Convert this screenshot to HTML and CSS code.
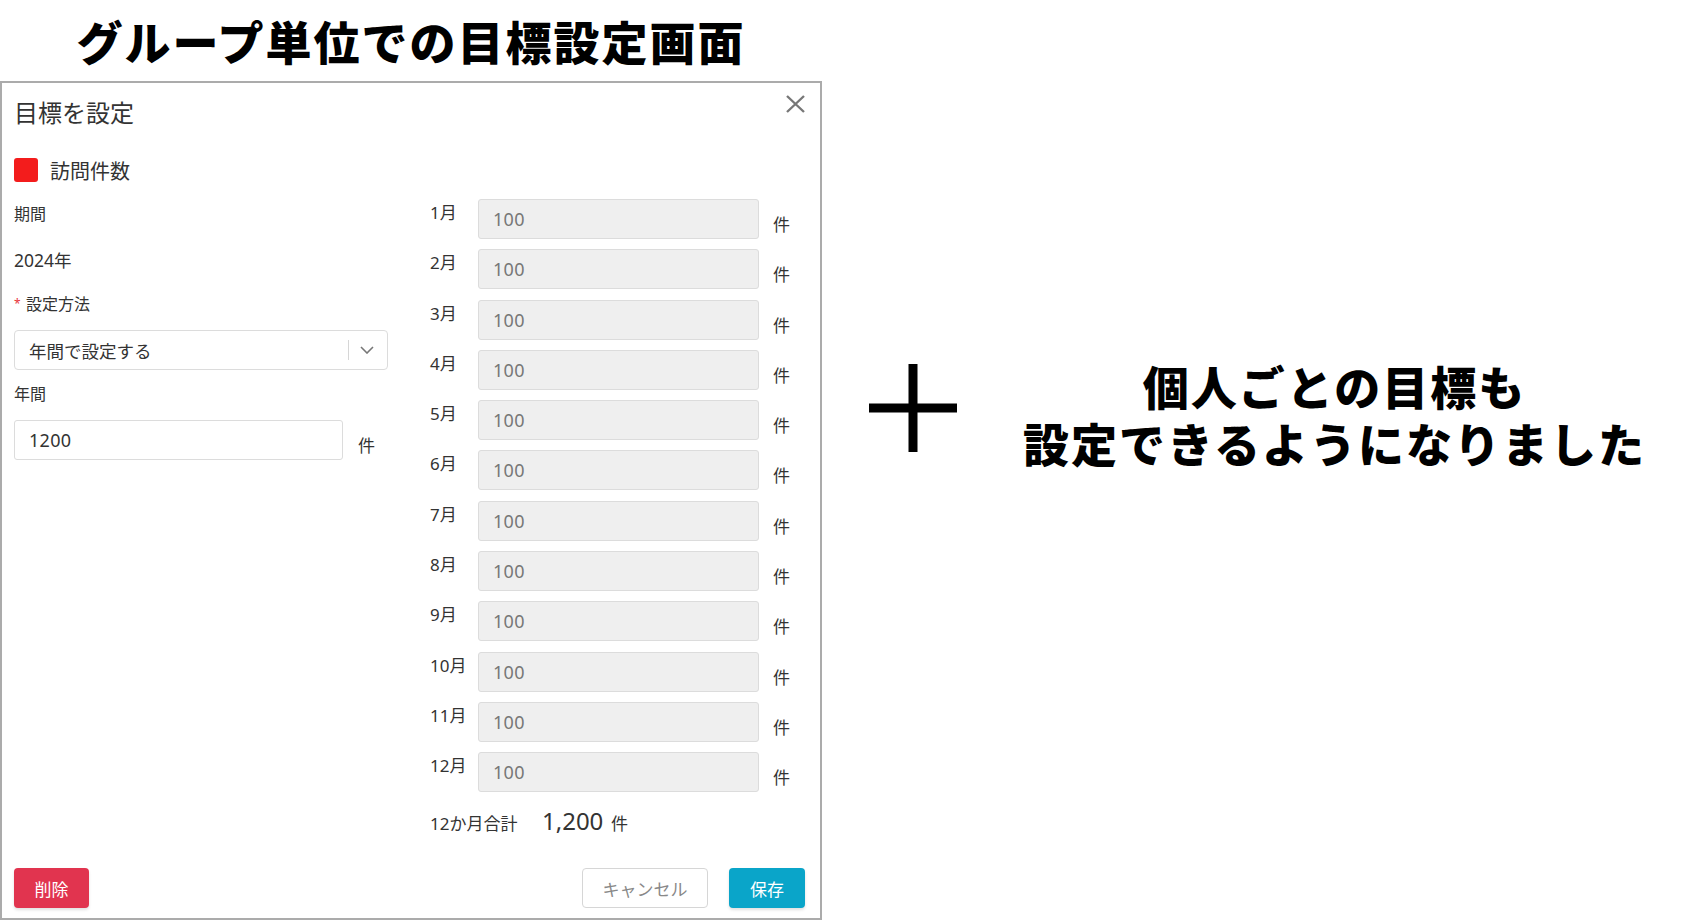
FILE: index.html
```html
<!DOCTYPE html>
<html lang="ja">
<head>
    <meta charset="utf-8">
    <title>目標設定</title>
    <link rel="stylesheet" href="styles.css">
</head>
<body>
    <div class="page">
        <div class="left">
            <h1 class="headline">グループ単位での目標設定画面</h1>

            <div class="modal">
                <div class="modal-header">
                    <h2>目標を設定</h2>
                    <button class="close" aria-label="閉じる">
                        <svg width="19" height="18" viewBox="0 0 19 18">
                            <path d="M1 1 L18 17 M18 1 L1 17" stroke="#777" stroke-width="2.4" fill="none"/>
                        </svg>
                    </button>
                </div>

                <div class="legend">
                    <span class="swatch"></span>
                    <span>訪問件数</span>
                </div>

                <div class="modal-body">
                    <div class="settings">
                        <div class="label first">期間</div>
                        <div class="value">2024年</div>
                        <div class="label required"><span class="star">*</span>設定方法</div>
                        <div class="select">
                            <span class="select-text">年間で設定する</span>
                            <span class="select-divider"></span>
                            <svg class="chevron" width="14" height="8" viewBox="0 0 14 8">
                                <path d="M1 1 L7 7 L13 1" stroke="#777" stroke-width="1.6" fill="none"/>
                            </svg>
                        </div>
                        <div class="label">年間</div>
                        <div class="field-row">
                            <div class="input white wide">1200</div>
                            <span class="unit">件</span>
                        </div>
                    </div>

                    <div class="months">
                        <div class="month-row"><span class="month">1月</span><div class="input">100</div><span class="unit">件</span></div>
                        <div class="month-row"><span class="month">2月</span><div class="input">100</div><span class="unit">件</span></div>
                        <div class="month-row"><span class="month">3月</span><div class="input">100</div><span class="unit">件</span></div>
                        <div class="month-row"><span class="month">4月</span><div class="input">100</div><span class="unit">件</span></div>
                        <div class="month-row"><span class="month">5月</span><div class="input">100</div><span class="unit">件</span></div>
                        <div class="month-row"><span class="month">6月</span><div class="input">100</div><span class="unit">件</span></div>
                        <div class="month-row"><span class="month">7月</span><div class="input">100</div><span class="unit">件</span></div>
                        <div class="month-row"><span class="month">8月</span><div class="input">100</div><span class="unit">件</span></div>
                        <div class="month-row"><span class="month">9月</span><div class="input">100</div><span class="unit">件</span></div>
                        <div class="month-row"><span class="month">10月</span><div class="input">100</div><span class="unit">件</span></div>
                        <div class="month-row"><span class="month">11月</span><div class="input">100</div><span class="unit">件</span></div>
                        <div class="month-row"><span class="month">12月</span><div class="input">100</div><span class="unit">件</span></div>

                        <div class="total">
                            <span class="total-label">12か月合計</span>
                            <span class="total-value">1,200</span>
                            <span class="total-unit">件</span>
                        </div>
                    </div>
                </div>

                <div class="modal-footer">
                    <button class="btn btn-danger">削除</button>
                    <div class="footer-right">
                        <button class="btn btn-cancel">キャンセル</button>
                        <button class="btn btn-primary">保存</button>
                    </div>
                </div>
            </div>
        </div>

        <div class="note">
            <svg class="plus" width="88" height="88" viewBox="0 0 88 88">
                <rect x="0" y="39.5" width="88" height="9" fill="#000"/>
                <rect x="39.5" y="0" width="9" height="88" fill="#000"/>
            </svg>
            <div class="message">
                <p>個人ごとの目標も</p>
                <p>設定できるようになりました</p>
            </div>
        </div>
    </div>
</body>
</html>
```

FILE: styles.css
```css
* {
    margin: 0;
    padding: 0;
    box-sizing: border-box;
}

body {
    background: #fff;
    color: #333;
    font-family: "Noto Sans", "Noto Sans CJK JP", sans-serif;
    width: 1696px;
    height: 920px;
    overflow: hidden;
}

.page {
    display: flex;
    height: 920px;
}

.left {
    width: 822px;
    flex-shrink: 0;
    display: flex;
    flex-direction: column;
}

.headline {
    height: 81px;
    line-height: 81px;
    text-align: center;
    font-family: "Noto Sans CJK JP", sans-serif;
    font-weight: 900;
    font-size: 46px;
    letter-spacing: 2px;
    color: #000;
}

/* modal */

.modal {
    height: 839px;
    border: 2px solid #ababab;
    padding: 12px 15px 10px 12px;
    display: flex;
    flex-direction: column;
}

.modal-header {
    display: flex;
    justify-content: space-between;
    align-items: flex-start;
}

.modal-header h2 {
    font-size: 24px;
    font-weight: 400;
    line-height: 36px;
    color: #333;
}

.close {
    border: none;
    background: none;
    width: 19px;
    height: 18px;
    cursor: pointer;
}

.close svg {
    display: block;
}

.legend {
    display: flex;
    align-items: center;
    gap: 12px;
    margin-top: 27px;
    height: 24px;
    font-size: 20px;
}

.swatch {
    width: 24px;
    height: 24px;
    border-radius: 3px;
    background: #f31c1c;
}

.modal-body {
    display: flex;
    gap: 42px;
    margin-top: 17px;
}

/* left side */

.settings {
    width: 374px;
}

.label {
    font-size: 16px;
    line-height: 24px;
    margin-top: 12px;
}

.label.first {
    margin-top: 3px;
}

.label.required {
    margin-top: 20px;
    display: flex;
}

.star {
    color: #e8333a;
    font-size: 12px;
    width: 12px;
}

.value {
    font-size: 17.5px;
    line-height: 24px;
    margin-top: 22px;
}

.select {
    margin-top: 14px;
    height: 40px;
    border: 1px solid #dcdcdc;
    border-radius: 4px;
    display: flex;
    align-items: center;
    padding: 0 13px 0 14px;
}

.select-text {
    flex: 1;
    font-size: 17.5px;
}

.select-divider {
    width: 1px;
    height: 20px;
    background: #d6d6d6;
    margin-right: 11px;
}

.field-row {
    display: flex;
    gap: 15px;
    margin-top: 14px;
}

.unit {
    font-size: 17px;
    line-height: 24px;
    margin-top: 14px;
}

.input {
    width: 281px;
    height: 40px;
    border: 1px solid #dcdcdc;
    border-radius: 3px;
    background: #efefef;
    color: #777;
    font-size: 18px;
    line-height: 38px;
    padding-left: 14px;
    letter-spacing: 0.3px;
}

.input.white {
    background: #fff;
    color: #333;
}

.input.wide {
    width: 329px;
}

/* months */

.months {
    display: flex;
    flex-direction: column;
    gap: 10.3px;
}

.month-row {
    display: flex;
    align-items: flex-start;
}

.month {
    width: 48px;
    font-size: 17px;
    line-height: 24px;
    margin-top: 2px;
}

.month-row .unit {
    margin-left: 14px;
}

.total {
    display: flex;
    align-items: baseline;
    margin-top: 2px;
    line-height: 32px;
}

.total-label {
    font-size: 17px;
    width: 112px;
}

.total-value {
    font-size: 24px;
    width: 69px;
}

.total-unit {
    font-size: 17px;
}

/* footer */

.modal-footer {
    margin-top: auto;
    display: flex;
    justify-content: space-between;
}

.footer-right {
    display: flex;
    gap: 21px;
}

.btn {
    height: 40px;
    border-radius: 4px;
    font-family: "Noto Sans", "Noto Sans CJK JP", sans-serif;
    font-size: 17px;
    cursor: pointer;
    border: none;
}

.btn-danger {
    width: 75px;
    background: #e1344f;
    color: #fff;
    box-shadow: 0 2px 3px rgba(0, 0, 0, 0.12);
}

.btn-cancel {
    width: 126px;
    background: #fff;
    border: 1px solid #d6d6d6;
    color: #888;
}

.btn-primary {
    width: 76px;
    background: #0aa5c9;
    color: #fff;
    box-shadow: 0 2px 3px rgba(0, 0, 0, 0.12);
}

/* right side note */

.note {
    flex: 1;
    display: flex;
    align-items: center;
    padding-bottom: 104px;
}

.plus {
    margin-left: 47px;
    flex-shrink: 0;
}

.message {
    flex: 1;
    text-align: center;
    padding-left: 16px;
    padding-top: 12px;
    font-family: "Noto Sans CJK JP", sans-serif;
    font-weight: 900;
    font-size: 46px;
    letter-spacing: 2px;
    color: #000;
}

.message p {
    height: 57px;
    line-height: 57px;
}
```
